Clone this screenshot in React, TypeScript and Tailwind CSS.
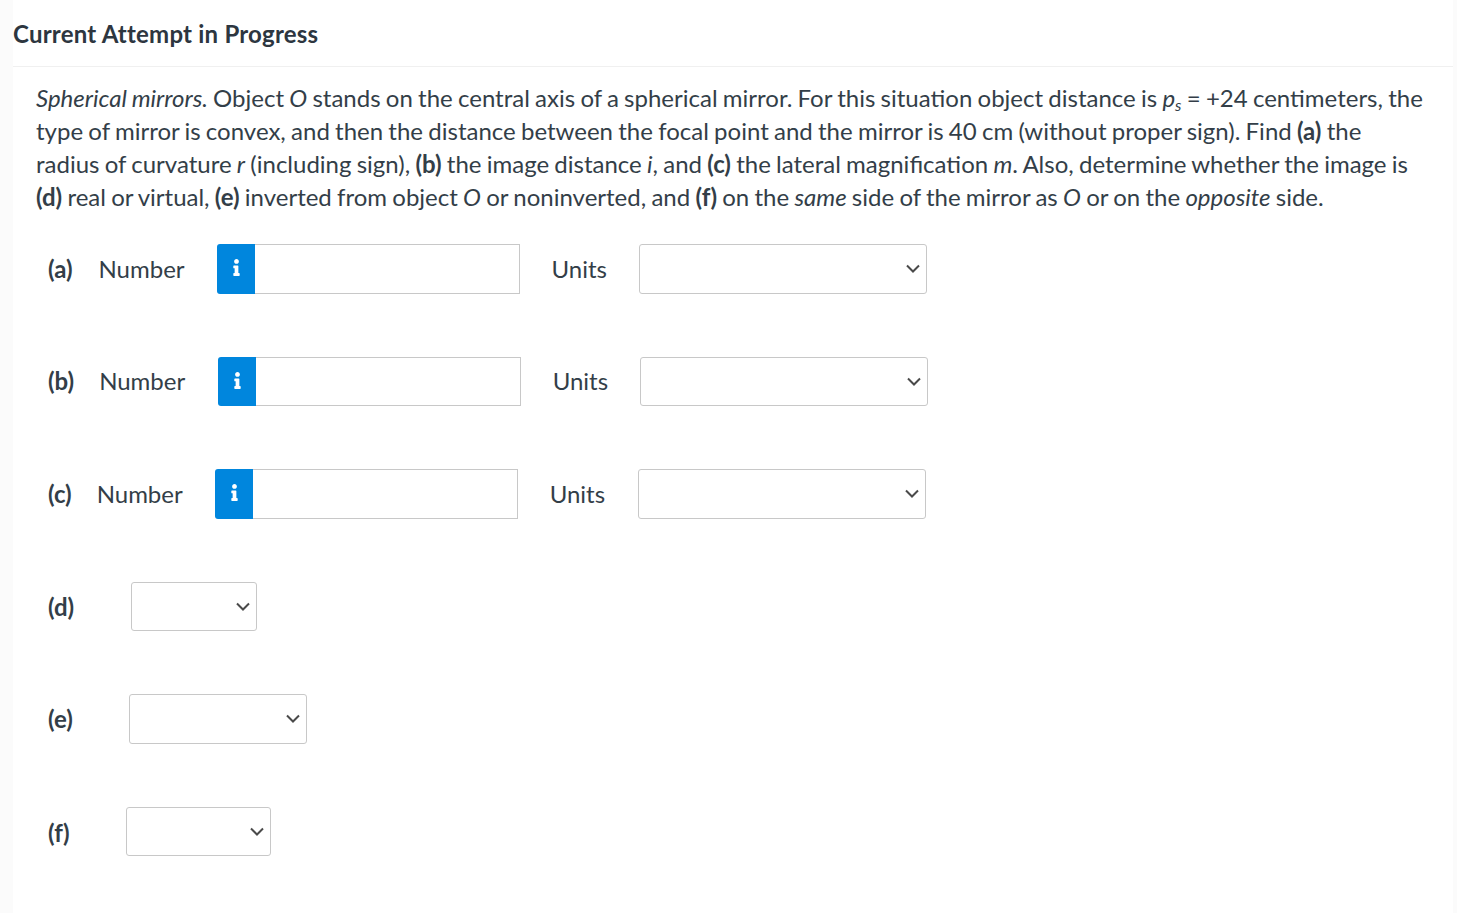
import React from "react";
import { FaInfo } from "react-icons/fa";

function Chevron() {
  return (
    <svg className="pointer-events-none absolute right-[7px] top-[20px]" width="14" height="10" viewBox="0 0 14 10" fill="none">
      <path d="M1 1.5 L7 7.5 L13 1.5" stroke="#4a4a4a" strokeWidth="2" />
    </svg>
  );
}

function Pick({ w }: { w: string }) {
  return (
    <div className={`relative h-full ${w}`}>
      <select className="h-full w-full appearance-none rounded-[3px] border border-[#c8c8c8] bg-white" />
      <Chevron />
    </div>
  );
}

function NumberRow({ label, gap, num, units }: { label: string; gap: string; num: string; units: string }) {
  return (
    <div className="flex h-[49.5px] items-center">
      <b className={`font-bold ${gap}`}>{label}</b>
      <span className={num}>Number</span>
      <span className="flex h-full w-[38px] shrink-0 items-center justify-center rounded-l-[3px] bg-[#0086dd] pb-[2px] pl-[1px] text-white">
        <FaInfo className="h-[17px] w-[17px]" />
      </span>
      <input className="h-full w-[265px] border border-l-0 border-[#c8c8c8] bg-white" />
      <span className={`ml-8 ${units}`}>Units</span>
      <Pick w="w-[288px]" />
    </div>
  );
}

function PickRow({ label, gap, w, drop }: { label: string; gap: string; w: string; drop: string }) {
  return (
    <div className="flex h-[49.5px] items-center">
      <b className={`font-bold ${gap} ${drop}`}>{label}</b>
      <Pick w={w} />
    </div>
  );
}

export default function App() {
  return (
    <div className="h-[913px] overflow-hidden bg-[#fbfbfb] pl-[13px] pr-[4px] font-['Lato',sans-serif] text-[24px] text-[#333e48]">
      <div className="h-full bg-white">
        <h1 className="flex h-[67px] items-center border-b border-[#f0f0f0] pt-[2px] text-[24px] font-bold tracking-[0.22px] text-[#2d3640]">
          Current Attempt in Progress
        </h1>
        <div className="pl-[23px] pt-[14px]">
          <p className="w-[1390px] leading-[33px] [word-spacing:-0.9px]">
            <i>Spherical mirrors.</i> Object <i>O</i> stands on the central axis of a spherical mirror. For this situation object distance is <i>p<sub className="text-[16px] leading-none">s</sub></i> = +24 centimeters, the type of mirror is convex, and then the distance between the focal point and the mirror is 40 cm (without proper sign). Find <b>(a)</b> the radius of curvature <i>r</i> (including sign), <b>(b)</b> the image distance <i>i</i>, and <b>(c)</b> the lateral magnification <i>m</i>. Also, determine whether the image is <b>(d)</b> real or virtual, <b>(e)</b> inverted from object <i>O</i> or noninverted, and <b>(f)</b> on the <i>same</i> side of the mirror as <i>O</i> or on the <i>opposite</i> side.
          </p>
          <div className="mt-[31px] flex flex-col gap-[63px] pl-[12px]">
            <NumberRow label="(a)" gap="mr-[26px]" num="w-[118px]" units="w-[87px]" />
            <NumberRow label="(b)" gap="mr-[25px]" num="w-[118.5px]" units="w-[87px]" />
            <NumberRow label="(c)" gap="mr-[25px]" num="w-[118px]" units="w-[88px]" />
            <PickRow label="(d)" gap="mr-[57px]" w="w-[126px]" drop="pt-[2px]" />
            <PickRow label="(e)" gap="mr-[56px]" w="w-[178px]" drop="pt-[1px]" />
            <PickRow label="(f)" gap="mr-[56px]" w="w-[145px]" drop="pt-[4px]" />
          </div>
        </div>
      </div>
    </div>
  );
}
